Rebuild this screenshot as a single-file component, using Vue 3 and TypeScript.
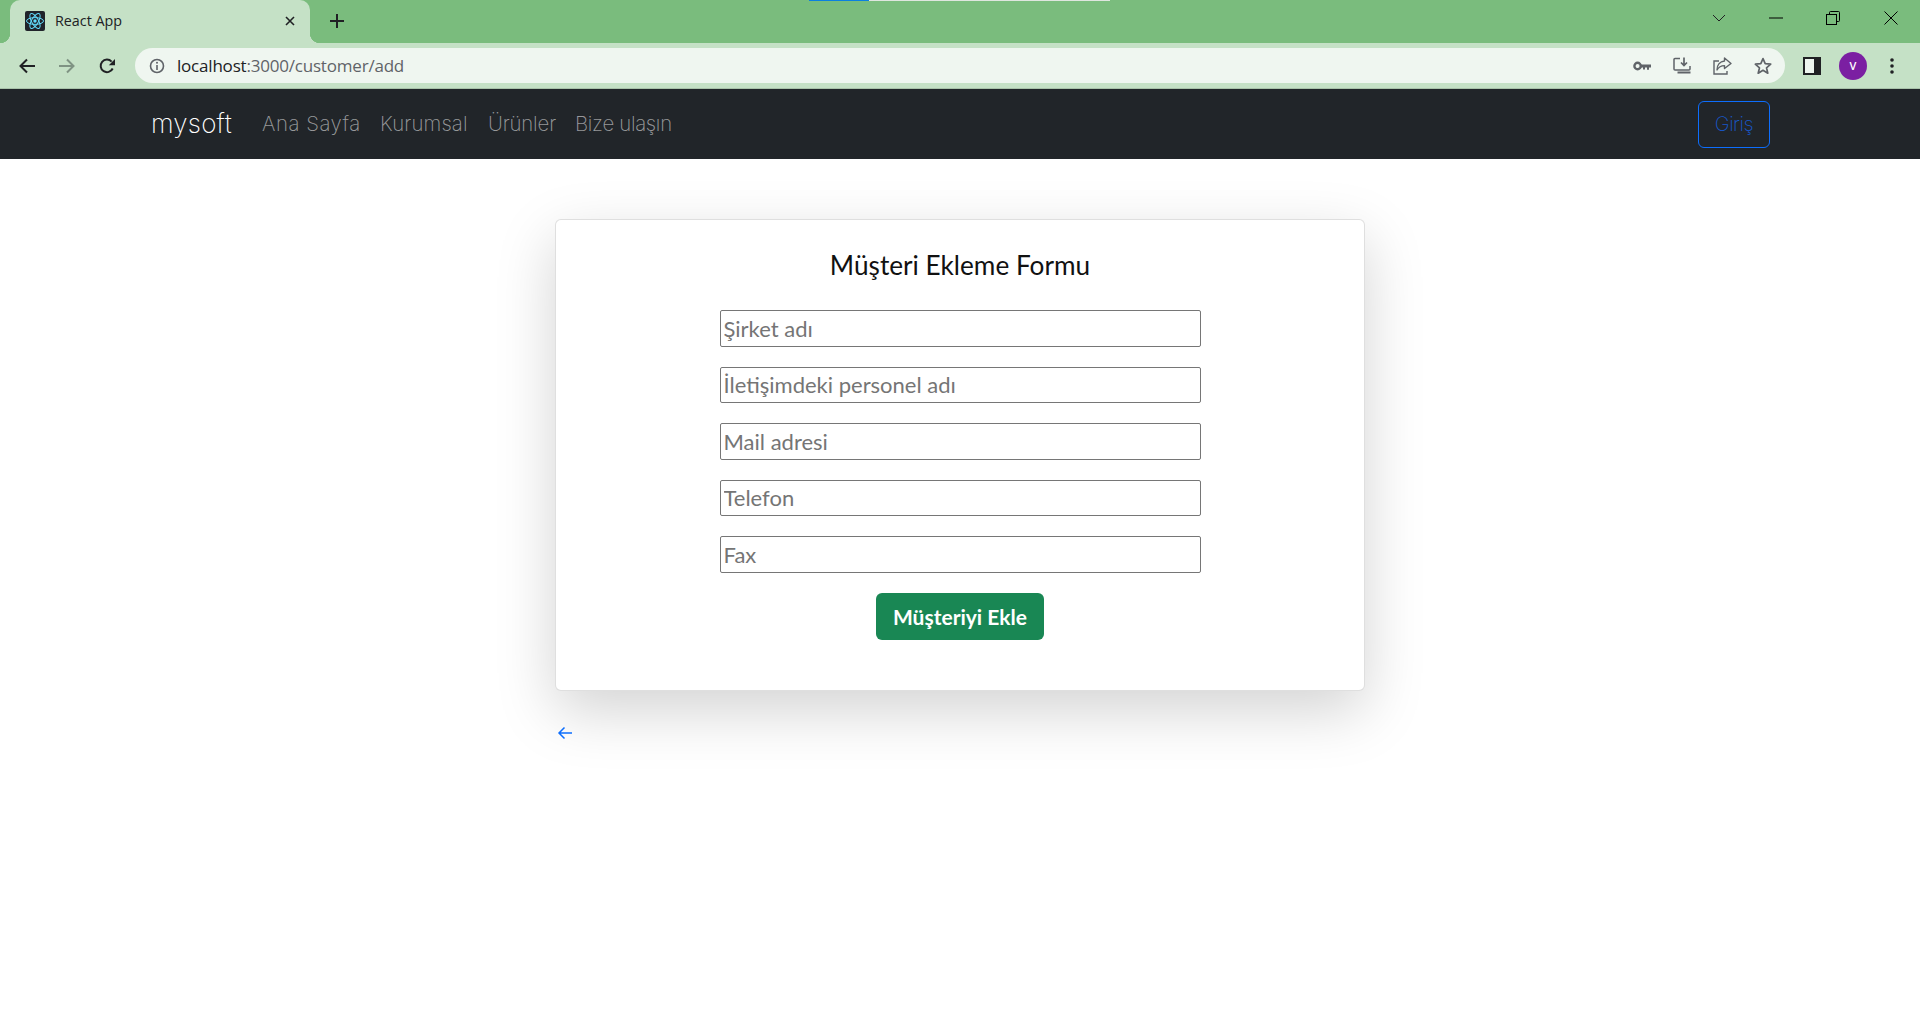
<script setup lang="ts">
const fields: string[] = ['Şirket adı', 'İletişimdeki personel adı', 'Mail adresi', 'Telefon', 'Fax']
const links: string[] = ['Ana Sayfa', 'Kurumsal', 'Ürünler', 'Bize ulaşın']
</script>

<template>
  <div class="page">
    <header class="tabstrip">
      <div class="progress"><span class="progress-done"></span></div>
      <div class="tab">
        <svg class="favicon" width="20" height="20" viewBox="0 0 20 20">
          <rect width="20" height="20" rx="2" fill="#20232a" />
          <g fill="none" stroke="#61dafb" stroke-width="1">
            <ellipse cx="10" cy="10" rx="8.5" ry="3.4" />
            <ellipse cx="10" cy="10" rx="8.5" ry="3.4" transform="rotate(60 10 10)" />
            <ellipse cx="10" cy="10" rx="8.5" ry="3.4" transform="rotate(120 10 10)" />
          </g>
          <circle cx="10" cy="10" r="1.7" fill="#61dafb" />
        </svg>
        <span class="tab-title">React App</span>
        <svg class="tab-close" width="10" height="10" viewBox="0 0 10 10">
          <path d="M1 1l8 8M9 1l-8 8" stroke="#202124" stroke-width="1.6" fill="none" />
        </svg>
      </div>
      <svg class="new-tab" width="14" height="14" viewBox="0 0 14 14">
        <path d="M7 0v14M0 7h14" stroke="#202124" stroke-width="2" fill="none" />
      </svg>
      <div class="window-controls">
        <svg class="wc-chevron" width="14" height="8" viewBox="0 0 14 8">
          <path d="M1 1l6 6 6-6" stroke="#202124" stroke-width="1" fill="none" />
        </svg>
        <svg class="wc-min" width="14" height="2" viewBox="0 0 14 2">
          <path d="M0 1h14" stroke="#000" stroke-width="1" fill="none" />
        </svg>
        <svg class="wc-max" width="14" height="14" viewBox="0 0 14 14">
          <rect x="0.5" y="3.5" width="10" height="10" fill="none" stroke="#000" />
          <path d="M3.5 3.5V1.5a1 1 0 0 1 1-1h8a1 1 0 0 1 1 1v8a1 1 0 0 1-1 1h-2" fill="none" stroke="#000" />
        </svg>
        <svg width="14" height="14" viewBox="0 0 14 14">
          <path d="M0.5 0.5l13 13M13.5 0.5l-13 13" stroke="#000" stroke-width="1" fill="none" />
        </svg>
      </div>
    </header>

    <div class="toolbar">
      <svg width="16" height="16" viewBox="0 0 16 16">
        <path d="M16 8H2M8 1.5L1.5 8 8 14.5" stroke="#202124" stroke-width="2" fill="none" />
      </svg>
      <svg class="tb-forward" width="16" height="16" viewBox="0 0 16 16">
        <path d="M0 8h14M8 1.5L14.5 8 8 14.5" stroke="#7f9383" stroke-width="2" fill="none" />
      </svg>
      <svg class="tb-reload" width="16" height="16" viewBox="0 0 16 16">
        <path d="M13.7 10.5A6.3 6.3 0 1 1 12.6 3.6" stroke="#202124" stroke-width="2" fill="none" />
        <path d="M16 1v6.2H9.8z" fill="#202124" />
      </svg>
      <div class="omnibox">
        <svg width="16" height="16" viewBox="0 0 16 16">
          <circle cx="8" cy="8" r="6.5" stroke="#5f6368" stroke-width="1.6" fill="none" />
          <path d="M8 7v5" stroke="#5f6368" stroke-width="1.6" />
          <circle cx="8" cy="4.8" r="1" fill="#5f6368" />
        </svg>
        <span class="url"><span class="url-host">localhost</span>:3000/customer/add</span>
        <div class="omni-actions">
          <svg width="18" height="10" viewBox="0 0 18 10">
            <circle cx="4.6" cy="5" r="3.2" fill="none" stroke="#5f6368" stroke-width="2.4" />
            <path d="M8 3.6h10v2.8h-2v2.4h-2V6.4h-2v2h-2V6.4H8z" fill="#5f6368" />
          </svg>
          <svg width="18" height="18" viewBox="0 0 18 18">
            <path d="M7 1.5H2a1 1 0 0 0-1 1V12a1 1 0 0 0 1 1h14a1 1 0 0 0 1-1V9" fill="none" stroke="#5f6368" stroke-width="1.5" />
            <path d="M11 0.5v7M8 5.5l3 3 3-3" fill="none" stroke="#5f6368" stroke-width="1.7" />
            <path d="M4.5 14.5h13v2h-13z" fill="#5f6368" />
          </svg>
          <svg width="19" height="18" viewBox="0 0 19 18">
            <path d="M6 4H1v13h13v-3" fill="none" stroke="#5f6368" stroke-width="1.4" />
            <path d="M11.5 1l6.5 5.5-6.5 5V8.6C8 8.6 5.6 10 4 13c0-5 3-8.6 7.5-9z" fill="none" stroke="#5f6368" stroke-width="1.4" stroke-linejoin="round" />
          </svg>
          <svg width="18" height="18" viewBox="0 0 18 18">
            <path d="M9 1.6l2.2 5.1 5.5.5-4.2 3.6 1.3 5.4L9 13.3l-4.8 2.9 1.3-5.4-4.2-3.6 5.5-.5z" fill="none" stroke="#5f6368" stroke-width="1.7" stroke-linejoin="round" />
          </svg>
        </div>
      </div>
      <svg class="side-panel" width="18" height="18" viewBox="0 0 18 18">
        <rect width="18" height="18" fill="#202124" />
        <rect x="2" y="2" width="9" height="14" fill="#eef5ef" />
      </svg>
      <span class="avatar">V</span>
      <svg class="menu" width="4" height="16" viewBox="0 0 4 16">
        <circle cx="2" cy="2" r="1.8" fill="#202124" />
        <circle cx="2" cy="8" r="1.8" fill="#202124" />
        <circle cx="2" cy="14" r="1.8" fill="#202124" />
      </svg>
    </div>

    <nav class="navbar">
      <a class="brand">mysoft</a>
      <ul class="nav-links">
        <li v-for="link in links" :key="link">{{ link }}</li>
      </ul>
      <button class="login" type="button">Giriş</button>
    </nav>

    <main class="content">
      <section class="card">
        <h1 class="card-title">Müşteri Ekleme Formu</h1>
        <form class="form" @submit.prevent>
          <input v-for="field in fields" :key="field" class="field" type="text" :placeholder="field" />
          <button class="submit" type="submit">Müşteriyi Ekle</button>
        </form>
      </section>
      <a class="back-link" aria-label="Geri">
        <svg width="16" height="16" viewBox="0 0 16 16">
          <path d="M15 8H2M7.5 2.5L2 8l5.5 5.5" stroke="#0d6efd" stroke-width="1.5" fill="none" />
        </svg>
      </a>
    </main>
  </div>
</template>

<style scoped>
.page {
  width: 1920px;
  height: 1028px;
  overflow: hidden;
  background: #fff;
  display: flex;
  flex-direction: column;
}
.tabstrip {
  position: relative;
  height: 43px;
  flex: none;
  background: #7abc7d;
  display: flex;
  align-items: center;
}
.progress {
  position: absolute;
  left: 809px;
  top: 0;
  width: 301px;
  height: 1px;
  background: #dfe6df;
}
.progress-done {
  display: block;
  width: 60px;
  height: 1px;
  background: #0b80e0;
}
.tab {
  position: relative;
  width: 300px;
  height: 43px;
  margin-left: 10px;
  background: #c5e1c6;
  border-radius: 10px 10px 0 0;
  display: flex;
  align-items: center;
  padding: 0 15px 1px 15px;
  box-sizing: border-box;
  flex: none;
}
.tab::before,
.tab::after {
  content: "";
  position: absolute;
  bottom: 0;
  width: 10px;
  height: 10px;
}
.tab::before {
  left: -10px;
  background: radial-gradient(circle at 0 0, transparent 10px, #c5e1c6 10.5px);
}
.tab::after {
  right: -10px;
  background: radial-gradient(circle at 100% 0, transparent 10px, #c5e1c6 10.5px);
}
.tab-title {
  margin: 0 0 2px 10px;
  font: 400 14.3px "Open Sans", sans-serif;
  color: #202124;
  flex: 1;
}
.new-tab {
  margin-left: 20px;
  margin-bottom: 1px;
}
.window-controls {
  margin-left: auto;
  height: 100%;
  box-sizing: border-box;
  display: flex;
  align-items: center;
  padding: 0 22px 7px 0;
}
.wc-chevron {
  margin-right: 43px;
}
.wc-min {
  margin-right: 43px;
}
.wc-max {
  margin-right: 44px;
}
.toolbar {
  height: 45px;
  flex: none;
  background: #c5e1c6;
  border-bottom: 1px solid #a9c2aa;
  display: flex;
  align-items: center;
  padding-left: 19px;
}
.tb-forward {
  margin-left: 24px;
}
.tb-reload {
  margin-left: 24px;
}
.omnibox {
  width: 1650px;
  height: 35px;
  margin-left: 20px;
  border-radius: 18px;
  background: #eff6f0;
  display: flex;
  align-items: center;
  padding: 0 13px 0 14px;
  box-sizing: border-box;
  flex: none;
}
.url {
  margin-left: 12px;
  font: 400 17px "Open Sans", sans-serif;
  letter-spacing: -0.2px;
  color: #5f6368;
}
.url-host {
  color: #202124;
}
.omni-actions {
  margin-left: auto;
  display: flex;
  align-items: center;
  gap: 22px;
}
.side-panel {
  margin-left: 18px;
}
.avatar {
  width: 28px;
  height: 28px;
  margin-left: 18px;
  border-radius: 50%;
  background: #7b1fa2;
  color: #fff;
  font: 600 11px "Open Sans", sans-serif;
  display: flex;
  align-items: center;
  justify-content: center;
}
.menu {
  margin-left: 23px;
}
.navbar {
  height: 70px;
  flex: none;
  background: #212529;
  display: flex;
  align-items: center;
  padding: 0 150px 0 151px;
}
.brand {
  width: 80px;
  margin-bottom: 2px;
  font: 200 26px "Inter", sans-serif;
  letter-spacing: 0.2px;
  color: #fff;
}
.nav-links {
  list-style: none;
  margin: 0 0 2px 31px;
  padding: 0;
  display: grid;
  grid-template-columns: 98px 88px 67px 97px;
  gap: 20px;
  font: 200 20.4px "Inter", sans-serif;
  white-space: nowrap;
  color: rgba(255, 255, 255, 0.55);
}
.nav-links li:nth-child(1) {
  letter-spacing: 0.55px;
}
.nav-links li:nth-child(2) {
  letter-spacing: 0.15px;
}
.nav-links li:nth-child(3) {
  letter-spacing: -0.15px;
}
.nav-links li:nth-child(4) {
  letter-spacing: -0.3px;
}
.login {
  margin-left: auto;
  width: 72px;
  height: 47px;
  padding: 0;
  background: transparent;
  border: 1px solid #0d6efd;
  border-radius: 6px;
  color: #1857c8;
  font: 200 20px "Inter", sans-serif;
  letter-spacing: -0.5px;
}
.content {
  width: 810px;
  margin: 60px auto 0 555px;
  display: flex;
  flex-direction: column;
}
.card {
  height: 472px;
  box-sizing: border-box;
  background: #fff;
  border: 1px solid rgba(0, 0, 0, 0.125);
  border-radius: 6px;
  box-shadow: 0 20px 60px rgba(0, 0, 0, 0.175);
  display: flex;
  flex-direction: column;
  align-items: center;
}
.card-title {
  margin: 28px 0 0;
  font: 400 26.2px/34px "Lato", sans-serif;
  color: #111;
}
.form {
  width: 481px;
  margin-top: 28px;
  display: flex;
  flex-direction: column;
  align-items: center;
  gap: 20px;
}
.field {
  width: 100%;
  height: 36.5px;
  flex: none;
  box-sizing: border-box;
  padding: 0 3px;
  border: 1px solid #767676;
  border-radius: 2px;
  background: #fff;
  font: 400 22px "Lato", sans-serif;
  color: #111;
  outline: none;
}
.field::placeholder {
  color: #757575;
  opacity: 1;
}
.submit {
  width: 168px;
  height: 47px;
  padding: 0;
  border: 0;
  border-radius: 6px;
  background: #198754;
  color: #fff;
  font: 700 21px "Lato", sans-serif;
}
.back-link {
  display: block;
  width: 16px;
  height: 16px;
  margin: 34px 0 0 2px;
}
</style>
